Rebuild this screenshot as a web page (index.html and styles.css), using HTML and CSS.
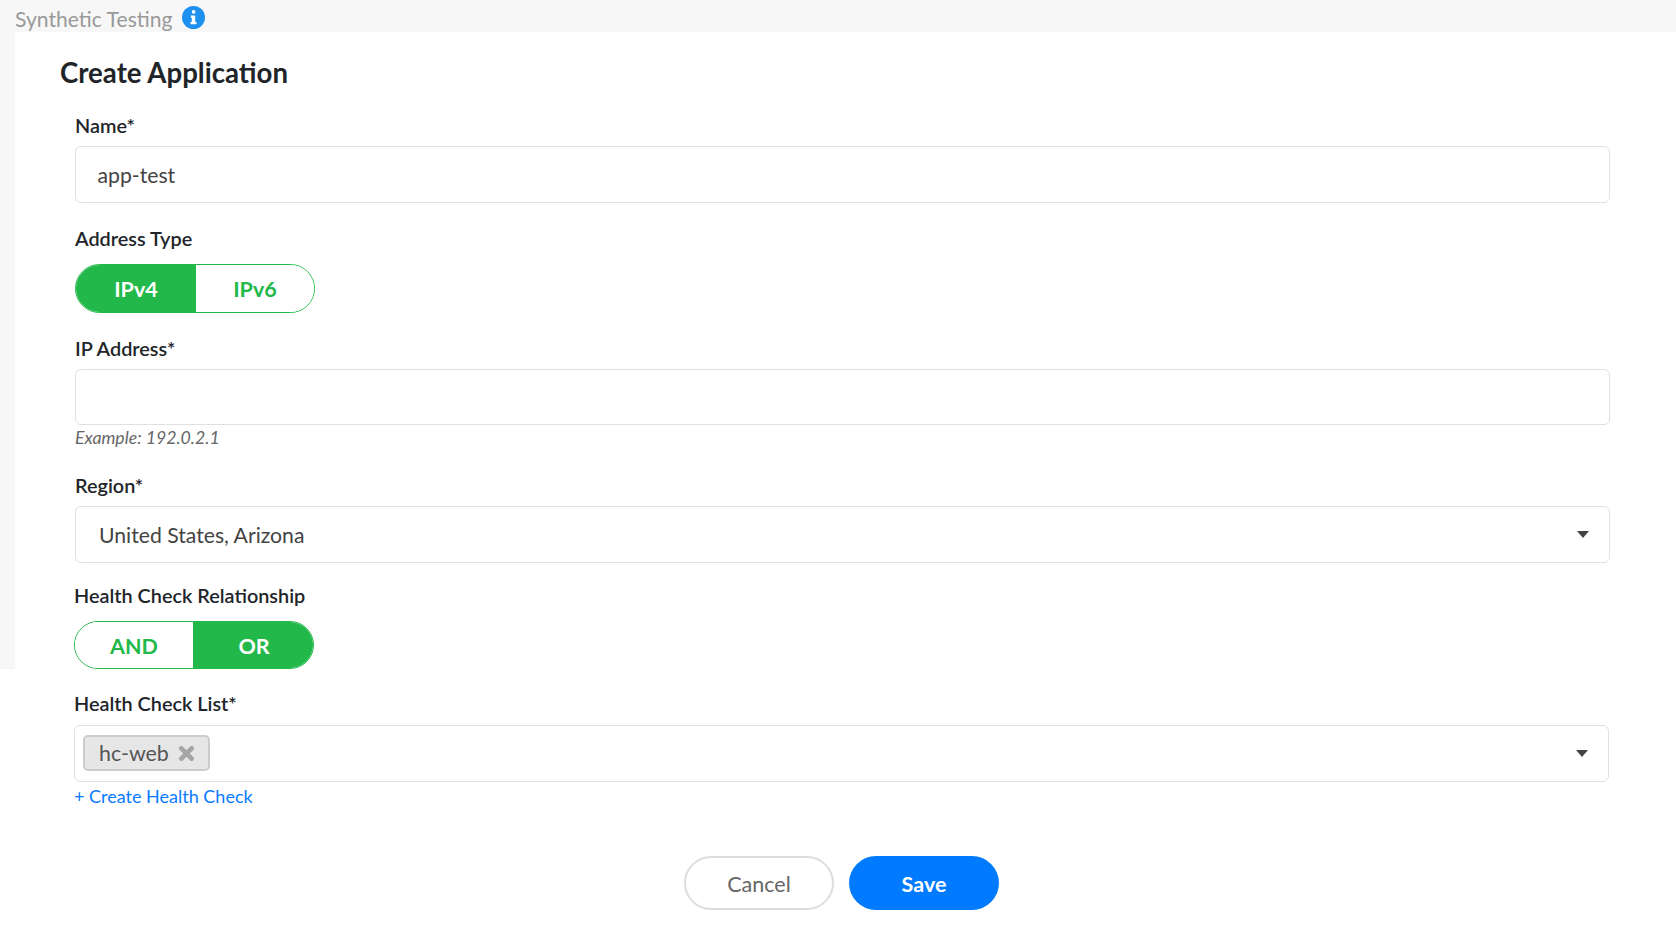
FILE: index.html
```html
<!DOCTYPE html>
<html lang="en">
<head>
<meta charset="utf-8">
<title>Create Application</title>
<link rel="stylesheet" href="styles.css">
</head>
<body>
<header class="topbar">
  <span class="topbar-title">Synthetic Testing</span>
  <svg class="info" viewBox="0 0 24 24" aria-hidden="true"><circle cx="12" cy="12" r="12" fill="#1e90f0"/><path fill="#fff" d="M10.200 6.200a1.900 1.900 0 1 1 3.800 0a1.900 1.900 0 1 1-3.800 0zM9.300 10h4.500v6.800h1.300V19H8.900v-2.200h1.300v-4.600H9.300z"/></svg>
</header>
<main class="content">
  <h1 class="page-title">Create Application</h1>
  <form class="form">
    <label class="label label-name">Name*</label>
    <div class="field field-name">app-test</div>
    <label class="label label-type">Address Type</label>
    <div class="toggle toggle-type">
      <span class="seg seg-wide seg-on">IPv4</span><span class="seg">IPv6</span>
    </div>
    <label class="label label-ip">IP Address*</label>
    <div class="field field-ip"></div>
    <p class="hint">Example: 192.0.2.1</p>
    <label class="label label-region">Region*</label>
    <div class="field field-select field-region">
      <span>United States, Arizona</span>
      <span class="caret"></span>
    </div>
    <div class="lower">
      <label class="label label-rel">Health Check Relationship</label>
      <div class="toggle toggle-rel">
        <span class="seg seg-narrow">AND</span><span class="seg seg-on">OR</span>
      </div>
      <label class="label label-list">Health Check List*</label>
      <div class="field field-select field-list">
        <span class="tag">hc-web
          <svg class="tag-x" viewBox="0 0 14 14" aria-hidden="true"><path d="M2.200 2.200l9.600 9.600M11.800 2.200l-9.600 9.600" stroke="#a6a6a6" stroke-width="4.400" stroke-linecap="round" fill="none"/></svg>
        </span>
        <span class="caret"></span>
      </div>
      <a class="create-link" href="#">+ Create Health Check</a>
      <div class="actions">
        <button type="button" class="btn btn-cancel">Cancel</button>
        <button type="button" class="btn btn-save">Save</button>
      </div>
    </div>
  </form>
</main>
</body>
</html>
```
FILE: styles.css
```css
* { box-sizing: border-box; }
html, body { margin: 0; height: 944px; }
body {
  font-family: Lato, "Open Sans", sans-serif;
  color: #212529;
  background: #fff linear-gradient(#f7f7f7, #f7f7f7) 0 0 / 15px 669px no-repeat;
  overflow: hidden;
}
.topbar {
  height: 32px;
  background: #f7f7f7;
  padding-left: 15px;
  display: flex;
  align-items: flex-start;
}
.topbar-title { font-size: 21.100px; line-height: 38px; color: #999; height: 32px; }
.info { width: 23px; height: 23px; margin: 6px 0 0 9px; }
.content { padding: 0 66px 0 75px; }
.page-title {
  margin: 0 0 0 -15px;
  padding-top: 23px;
  height: 80px;
  font-size: 27.600px;
  line-height: 36px;
  font-weight: 700;
  color: #212529;
}
.form { display: block; }
.label { display: block; font-size: 19.850px; line-height: 26px; font-weight: 600; color: #212529; }
.label-name { height: 34px; }
.field {
  border: 1.500px solid #e0e0e0;
  border-radius: 6px;
  background: #fff;
  font-size: 21.200px;
  color: #444;
}
.field-name { height: 57px; line-height: 56px; padding-left: 21.500px; }
.label-type { margin-top: 22px; height: 39px; }
.toggle {
  display: flex;
  width: 240px;
  height: 49px;
  border: 1.500px solid #22b94a;
  border-radius: 25px;
  overflow: hidden;
  font-size: 21.500px;
  font-weight: 700;
}
.seg {
  flex: 1;
  display: flex;
  align-items: center;
  justify-content: center;
  color: #22b94a;
  background: #fff;
}
.seg-wide { flex: 0 0 120px; }
.seg-narrow { flex: 0 0 118px; }
.seg-on { background: #22b94a; color: #fff; }
.label-ip { margin-top: 22px; height: 34px; }
.field-ip { height: 56px; }
.hint { margin: 0; height: 26px; font-size: 17.700px; line-height: 26px; font-style: italic; color: #666; }
.label-region { margin-top: 21px; height: 34px; }
.field-select {
  display: flex;
  align-items: center;
  justify-content: space-between;
  height: 57px;
}
.field-region { padding: 0 20px 0 23px; }
.caret {
  width: 0;
  height: 0;
  border-left: 6.500px solid transparent;
  border-right: 6.500px solid transparent;
  border-top: 7px solid #444;
}
.lower { margin: 19px 1px 0 -1px; }
.label-rel { height: 39px; }
.toggle-rel { width: 240px; height: 48px; }
.toggle-rel .seg { padding-top: 2px; }
.toggle-rel .seg-on { padding-left: 2px; }
.label-list { margin-top: 21px; height: 35px; }
.field-list { padding: 0 20px 0 8px; }
.tag {
  display: inline-flex;
  align-items: center;
  gap: 10px;
  height: 36px;
  width: 127px;
  margin-bottom: 1px;
  padding-left: 14px;
  background: #e6e6e6;
  border: 2px solid #ccc;
  border-radius: 5px;
  color: #555;
  font-size: 21.400px;
}
.tag-x { width: 15px; height: 15px; }
.create-link { display: block; margin-top: 1px; font-size: 18px; line-height: 26px; color: #0a7bff; text-decoration: none; }
.actions { display: flex; gap: 15px; margin: 47px 0 0 610px; }
.btn { width: 150px; height: 54px; padding-top: 3px; border-radius: 27px; font: inherit; font-size: 21.500px; cursor: pointer; }
.btn-cancel { background: #fff; border: 2px solid #ddd; color: #666; }
.btn-save { background: #007bff; border: 0; color: #fff; font-weight: 700; }
```
